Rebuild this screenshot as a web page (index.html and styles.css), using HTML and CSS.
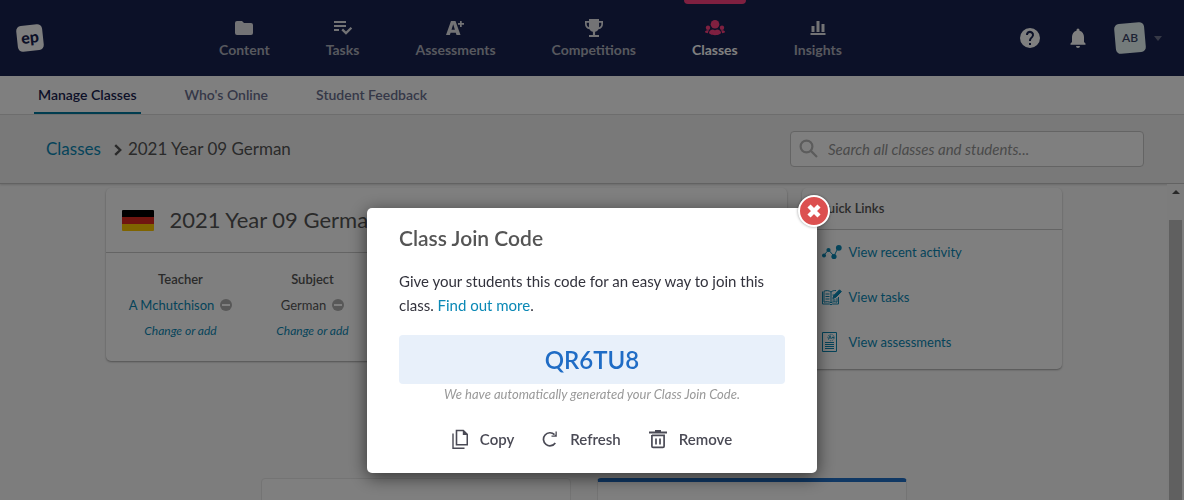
FILE: index.html
```html
<!DOCTYPE html>
<html lang="en">
<head>
<meta charset="utf-8">
<meta name="viewport" content="width=device-width, initial-scale=1">
<title>2021 Year 09 German</title>
<link rel="stylesheet" href="styles.css">
</head>
<body>
<header class="topbar">
  <a class="logo" href="#" aria-label="Home"><span class="logo-text">ep</span></a>
  <nav class="nav" aria-label="Main">
    <a class="nav-item" href="#">
      <svg class="nav-icon" viewBox="0 0 24 24"><path d="M10 5H5a2 2 0 0 0-2 2v10a2 2 0 0 0 2 2h14a2 2 0 0 0 2-2V9a2 2 0 0 0-2-2h-7z"/></svg>
      <span>Content</span>
    </a>
    <a class="nav-item" href="#">
      <svg class="nav-icon" viewBox="0 0 24 24"><path d="M3 5h12v2H3zM3 9h12v2H3zM3 13h5v2H3zM19.600 11l1.600 1.600-6.200 6.200-4.600-4.600L12 12.600l3 3z"/></svg>
      <span>Tasks</span>
    </a>
    <a class="nav-item" href="#">
      <svg class="nav-icon" viewBox="0 0 24 24"><path fill-rule="evenodd" d="M3 19 8 5h4.500l5 14h-4l-.7-2.300H7.600L6.900 19zM8.500 13.800h3.400L10.200 8.300zM17 5h1.700v2H21v1.700h-2.300V11H17V8.700h-2V7h2z"/></svg>
      <span>Assessments</span>
    </a>
    <a class="nav-item" href="#">
      <svg class="nav-icon" viewBox="0 0 24 24"><path fill-rule="evenodd" d="M7 3h10v2h4v3c0 3-1.800 4.800-4.500 5.200-.8 1.300-2 2.200-3.400 2.500V19H17v2H7v-2h3.900v-3.300c-1.400-.3-2.600-1.200-3.400-2.500C4.800 12.800 3 11 3 8V5h4zM4.700 6.700V8c0 1.500.8 2.700 2.200 3.200L7 6.700zM17 6.700l.1 4.500c1.400-.5 2.200-1.700 2.200-3.200V6.700z"/></svg>
      <span>Competitions</span>
    </a>
    <a class="nav-item nav-item-active" href="#" aria-current="page">
      <svg class="nav-icon" viewBox="0 0 24 24"><circle cx="12" cy="8.200" r="4.300"/><circle cx="5" cy="11.700" r="2.200"/><circle cx="19" cy="11.700" r="2.200"/><path d="M6 16.800c0-2 2-3 4-3.200 1.300.8 2.700.8 4 0 2 .2 4 1.200 4 3.200 0 1-2.500 2.400-6 2.400s-6-1.400-6-2.400zM2 15.800c0-1.200 2-1.800 4.400-1.500-.9.700-1.400 1.500-1.400 2.900-1.500 0-3-.4-3-1.400zM22 15.800c0-1.200-2-1.800-4.400-1.500.9.700 1.400 1.500 1.400 2.900 1.500 0 3-.4 3-1.400z"/></svg>
      <span>Classes</span>
    </a>
    <a class="nav-item" href="#">
      <svg class="nav-icon" viewBox="0 0 24 24"><path d="M4.500 17h15v2h-15zM5.500 10h3v6h-3zM10.500 5h3v11h-3zM15.500 8h3v8h-3z"/></svg>
      <span>Insights</span>
    </a>
  </nav>
  <div class="account">
    <button class="icon-button" type="button" aria-label="Help">
      <svg viewBox="0 0 24 24"><path d="M12 2a10 10 0 1 0 0 20 10 10 0 0 0 0-20zm1 17h-2v-2h2zm2.070-7.750-.9.920C13.450 12.900 13 13.500 13 15h-2v-.5c0-1.100.45-2.100 1.170-2.830l1.240-1.260A2 2 0 1 0 10 9H8a4 4 0 1 1 7.070 2.250z"/></svg>
    </button>
    <button class="icon-button" type="button" aria-label="Notifications">
      <svg viewBox="0 0 24 24"><path d="M12 22a2 2 0 0 0 2-2h-4a2 2 0 0 0 2 2zm6-6v-5c0-3.070-1.640-5.640-4.500-6.320V4a1.500 1.500 0 0 0-3 0v.68C7.630 5.360 6 7.920 6 11v5l-1.500 1.500v1.200h15v-1.200z"/></svg>
    </button>
    <button class="profile" type="button" aria-label="Account menu">
      <span class="avatar"><span class="avatar-text">AB</span></span>
      <svg class="caret" viewBox="0 0 8 5"><path d="M0 0h8L4 5z"/></svg>
    </button>
  </div>
</header>

<nav class="subnav" aria-label="Classes">
  <a class="subnav-item subnav-item-active" href="#">Manage Classes</a>
  <a class="subnav-item" href="#">Who's Online</a>
  <a class="subnav-item" href="#">Student Feedback</a>
</nav>

<div class="pagebar">
  <div class="breadcrumb">
    <a class="link" href="#">Classes</a>
    <svg class="chevron" viewBox="0 0 8 12"><path d="m1.200 1.200 5 4.800-5 4.800"/></svg>
    <span>2021 Year 09 German</span>
  </div>
  <label class="search">
    <svg class="search-icon" viewBox="0 0 20 20"><circle cx="7.500" cy="7.500" r="5.900"/><path d="m11.900 11.900 6.100 6.100"/></svg>
    <input class="search-input" type="text" aria-label="Search" placeholder="Search all classes and students...">
  </label>
</div>

<div class="scroller">
  <main class="content">
    <div class="columns">
      <section class="card">
        <div class="class-head">
          <svg class="flag" viewBox="0 0 32 21"><path fill="#000" d="M0 0h32v7H0z"/><path fill="#e02b20" d="M0 7h32v7H0z"/><path fill="#ffc800" d="M0 14h32v7H0z"/></svg>
          <h1 class="class-title">2021 Year 09 German</h1>
        </div>
        <div class="facts">
          <div class="fact">
            <h2 class="fact-title">Teacher</h2>
            <div class="fact-value">
              <a class="link" href="#">A Mchutchison</a>
              <button class="minus" type="button" aria-label="Remove teacher"></button>
            </div>
            <a class="link fact-edit" href="#">Change or add</a>
          </div>
          <div class="fact">
            <h2 class="fact-title">Subject</h2>
            <div class="fact-value">
              <span>German</span>
              <button class="minus" type="button" aria-label="Remove subject"></button>
            </div>
            <a class="link fact-edit" href="#">Change or add</a>
          </div>
        </div>
      </section>

      <aside class="card">
        <h2 class="quick-title">Quick Links</h2>
        <div class="quick-links">
          <a class="link quick-link" href="#">
            <svg class="quick-icon" viewBox="0 0 20 20"><path fill="none" stroke="currentColor" d="m2 13 4.500-5 5.500 6 4.500-9"/><g fill="currentColor"><circle cx="2" cy="13.500" r="2"/><circle cx="6.500" cy="8" r="2.100"/><circle cx="12" cy="14.500" r="2.600"/><circle cx="16.800" cy="5.800" r="2.900"/></g></svg>
            View recent activity
          </a>
          <a class="link quick-link" href="#">
            <svg class="quick-icon" viewBox="0 0 20 20" fill="none" stroke="currentColor"><path d="M.5 4.500v12.500h7l1.500.8 1.500-.8h6v-7M2 15V4.200C4.500 3.200 7 3.500 9 5c1.500-1.200 3-1.700 5-1.400M2 15.200c2.500-.8 5-.6 7 .5 2-1.200 4-1.200 6-.5v-4M9 5v10.500M3.500 7h4M3.500 9.500h4M3.500 12h4M10.500 8h2M10.500 13h3"/><path fill="currentColor" d="m10.800 11.500 1-3 5.700-5.700 1.900 1.900-5.800 5.700z"/></svg>
            View tasks
          </a>
          <a class="link quick-link" href="#">
            <svg class="quick-icon" viewBox="0 0 20 20" fill="none" stroke="currentColor"><path d="M.5.5h14v19H.5zM3 10.500h9M3 12.500h9M3 14.500h9M3 16.500h9"/><circle cx="9" cy="5.500" r="3.200" stroke-dasharray="1.500 .8" stroke-width=".7"/><path stroke-width=".8" d="m6.500 7 1.500-3.500L9.500 7M7 6h2M10 5.500h2M11 4.500v2"/></svg>
            View assessments
          </a>
        </div>
      </aside>
    </div>

    <div class="tiles">
      <section class="tile"></section>
      <section class="tile tile-accent"></section>
    </div>
  </main>
  <div class="scrollbar" aria-hidden="true">
    <svg class="scroll-arrow" viewBox="0 0 8 4"><path d="M0 4h8L4 0z"/></svg>
    <div class="scroll-thumb"></div>
  </div>
</div>

<div class="backdrop">
  <section class="modal" role="dialog" aria-modal="true" aria-labelledby="modal-title">
    <button class="close" type="button" aria-label="Close">
      <svg viewBox="0 0 16 16"><path d="m3 3 10 10m0-10L3 13"/></svg>
    </button>
    <h2 class="modal-title" id="modal-title">Class Join Code</h2>
    <p class="modal-text">Give your students this code for an easy way to join this class. <a class="link" href="#">Find out more</a>.</p>
    <div class="code">QR6TU8</div>
    <p class="caption">We have automatically generated your Class Join Code.</p>
    <div class="actions">
      <button class="action" type="button">
        <svg width="16" height="20" viewBox="0 0 16 20"><path fill="none" stroke="currentColor" stroke-width="1.600" d="M4.500 1.500h6.800l4 4v10.300H4.500z"/><path fill="currentColor" d="M10.800 1v5h5z"/><path fill="none" stroke="currentColor" stroke-width="1.400" d="M1 4.500v14.700h11.500"/></svg>
        Copy
      </button>
      <button class="action" type="button">
        <svg width="16" height="16" viewBox="0 0 16 16"><path fill="none" stroke="currentColor" stroke-width="1.700" d="M13.300 12A6.500 6.500 0 1 1 12.500 3.600"/><path fill="currentColor" d="M14.800.5v5.300H9.500V4.500h3L13.500 3.500v-3z"/></svg>
        Refresh
      </button>
      <button class="action" type="button">
        <svg width="18" height="20" viewBox="0 0 18 20"><path fill="currentColor" d="M0 2.500h6V1h6v1.500h6v2H0z"/><path fill="none" stroke="currentColor" stroke-width="1.700" d="M2.900 6v11.200c0 .8.500 1.200 1.200 1.200h9.800c.7 0 1.200-.4 1.200-1.200V6.400H2.900M7 9.500v6M11 9.500v6"/></svg>
        Remove
      </button>
    </div>
  </section>
</div>
</body>
</html>
```
FILE: styles.css
```css
* { box-sizing: border-box; }

body {
  margin: 0;
  height: 100vh;
  display: flex;
  flex-direction: column;
  overflow: hidden;
  background: #fafafa;
  color: #555;
  font: 14px/20px Lato, "Open Sans", sans-serif;
}

h1, h2, p { margin: 0; }
a { text-decoration: none; }
svg { display: block; flex: none; }
button { border: 0; padding: 0; background: none; font: inherit; color: inherit; cursor: pointer; }
.link { color: #0a88b5; }

/* Top bar */
.topbar {
  flex: none;
  display: flex;
  align-items: center;
  height: 76px;
  padding: 0 22px 0 17px;
  background: #182250;
}
.logo {
  display: grid;
  place-items: center;
  width: 26px;
  height: 26px;
  border-radius: 5px;
  background: #fff;
  color: #182250;
  transform: rotate(-6deg);
}
.logo-text { font-size: 16px; font-weight: 900; line-height: 20px; padding-bottom: 3px; }
.nav { display: flex; gap: 40px; margin: 0 auto; align-self: stretch; }
.nav-item {
  display: flex;
  flex-direction: column;
  align-items: center;
  padding: 0 8px;
  color: #aeb1bd;
  font-weight: 700;
}
.nav-item::before {
  content: "";
  align-self: stretch;
  height: 4px;
  margin: 0 -8px 12px;
  border-radius: 0 0 4px 4px;
}
.nav-icon { width: 24px; height: 24px; fill: #e6e6ea; }
.nav-item-active { color: #fff; }
.nav-item-active::before { background: #ff4080; }
.nav-item-active .nav-icon { fill: #ff4080; }
.account { display: flex; align-items: center; gap: 24px; }
.icon-button svg { width: 24px; height: 24px; fill: #fff; }
.profile { display: flex; align-items: center; gap: 8px; }
.avatar {
  display: grid;
  place-items: center;
  width: 30px;
  height: 30px;
  margin: 0 1px;
  border-radius: 5px;
  background: #e8f7f7;
  color: #3a4468;
  font-size: 12px;
  font-weight: 600;
  transform: rotate(-5deg);
}
.avatar-text { transform: rotate(5deg); }
.caret { width: 8px; height: 5px; fill: #6c728c; }

/* Section tabs */
.subnav {
  flex: none;
  display: flex;
  gap: 40px;
  height: 39px;
  padding: 0 34px;
  background: #fff;
  border-bottom: 1px solid #dcdcdc;
}
.subnav-item {
  padding: 9px 4px 0;
  border-bottom: 2px solid transparent;
  color: #6b7090;
  font-weight: 600;
}
.subnav-item-active { color: #182250; border-color: #00789e; }

/* Breadcrumb and search */
.pagebar {
  flex: none;
  display: flex;
  align-items: center;
  justify-content: space-between;
  height: 69px;
  padding: 0 40px 0 46px;
  background: #f2f2f2;
  border-bottom: 1px solid #c4c4c4;
  box-shadow: 0 1px 2px rgba(0, 0, 0, .15);
}
.breadcrumb { display: flex; align-items: center; font-size: 17px; line-height: 24px; }
.chevron { width: 8px; height: 12px; margin: 2px 6px 0 13px; fill: none; stroke: #555; stroke-width: 2.4; }
.search {
  display: flex;
  align-items: center;
  gap: 9px;
  width: 354px;
  height: 36px;
  padding: 0 8px;
  background: #fff;
  border: 1px solid #c8c8c8;
  border-radius: 4px;
}
.search-icon { width: 20px; height: 20px; fill: none; stroke: #b8b8b8; stroke-width: 2.2; }
.search-input {
  flex: 1;
  min-width: 0;
  padding: 0;
  border: 0;
  outline: 0;
  background: none;
  font: italic 15px/20px Lato, "Open Sans", sans-serif;
}
.search-input::placeholder { color: #949494; opacity: 1; }

/* Scrolling area */
.scroller { flex: 1; min-height: 0; display: flex; overflow: hidden; }
.content { flex: 1; min-width: 0; padding: 4px 16px 0; }
.columns {
  display: grid;
  grid-template-columns: 1fr 260px;
  gap: 15px;
  align-items: start;
  max-width: 956px;
  margin: 0 auto;
}
.card {
  background: #fff;
  border-radius: 5px;
  box-shadow: 0 1px 2px rgba(0, 0, 0, .35);
}
.class-head {
  display: flex;
  align-items: center;
  gap: 16px;
  padding: 16px;
  border-bottom: 1px solid #c8c8c8;
}
.flag { width: 32px; height: 21px; border-radius: 1px; overflow: hidden; }
.class-title { font-size: 22px; font-weight: 400; line-height: 32px; }
.facts { display: flex; padding: 16px 9px 20px; }
.fact { display: flex; flex-direction: column; align-items: center; gap: 6px; width: 132px; }
.fact-title { font-size: 13px; font-weight: 600; line-height: 20px; }
.fact-value { display: flex; align-items: center; gap: 6px; font-size: 13px; }
.fact-edit { font-size: 12px; font-style: italic; }
.minus {
  width: 12px;
  height: 12px;
  border-radius: 50%;
  background: linear-gradient(#fff, #fff) center / 8px 2px no-repeat #b0b0b0;
}
.quick-title {
  padding: 10px 16px 11px;
  border-bottom: 1px solid #c8c8c8;
  font-size: 13px;
  font-weight: 600;
  line-height: 20px;
}
.quick-links { display: grid; gap: 25px; padding: 12px 20px 17px; font-size: 13px; }
.quick-link { display: flex; align-items: center; gap: 7px; }
.quick-icon { width: 20px; height: 20px; }
.tiles {
  display: grid;
  grid-template-columns: 1fr 1fr;
  gap: 26px;
  max-width: 646px;
  margin: 109px auto 0;
}
.tile {
  height: 200px;
  background: #fff;
  border: 1px solid #e8e8e8;
  border-radius: 4px;
}
.tile-accent { border-top: 4px solid #2070c8; }
.scrollbar {
  display: flex;
  flex-direction: column;
  align-items: center;
  gap: 26px;
  width: 17px;
  padding-top: 6px;
  background: #f8f8f8;
}
.scroll-arrow { width: 8px; height: 4px; fill: #505050; }
.scroll-thumb { flex: 1; width: 13px; background: #c1c1c1; }

/* Modal */
.backdrop {
  position: fixed;
  inset: 0;
  padding: 208px 16px 0;
  background: rgba(0, 0, 0, .5);
}
.modal {
  position: relative;
  max-width: 450px;
  margin: 0 auto;
  padding: 16px 32px 22px;
  border-radius: 5px;
  background: #fff;
  box-shadow: 0 4px 18px rgba(0, 0, 0, .6);
  text-align: center;
}
.close {
  position: absolute;
  top: -13px;
  right: -13px;
  display: grid;
  place-items: center;
  width: 32px;
  height: 32px;
  border: 2px solid #fff;
  border-radius: 50%;
  background: #dc5050;
  box-shadow: 0 0 3px rgba(0, 0, 0, .4);
}
.close svg { width: 16px; height: 16px; stroke: #fff; stroke-width: 4.4; }
.modal-title { font-size: 21px; font-weight: 600; line-height: 28px; text-align: left; }
.modal-text { margin-top: 17px; color: #33333d; font-size: 15px; line-height: 24px; text-align: left; }
.code {
  margin-top: 18px;
  padding: 8px;
  border-radius: 4px;
  background: #e8f0fa;
  color: #1f6cc5;
  font-size: 24px;
  font-weight: 600;
  line-height: 33px;
}
.caption { color: #999; font-size: 13px; font-style: italic; line-height: 20px; }
.actions { display: flex; justify-content: center; gap: 28px; margin-top: 23px; }
.action { display: flex; align-items: center; gap: 12px; color: #4a4a55; font-size: 15px; font-weight: 600; line-height: 24px; }
```
